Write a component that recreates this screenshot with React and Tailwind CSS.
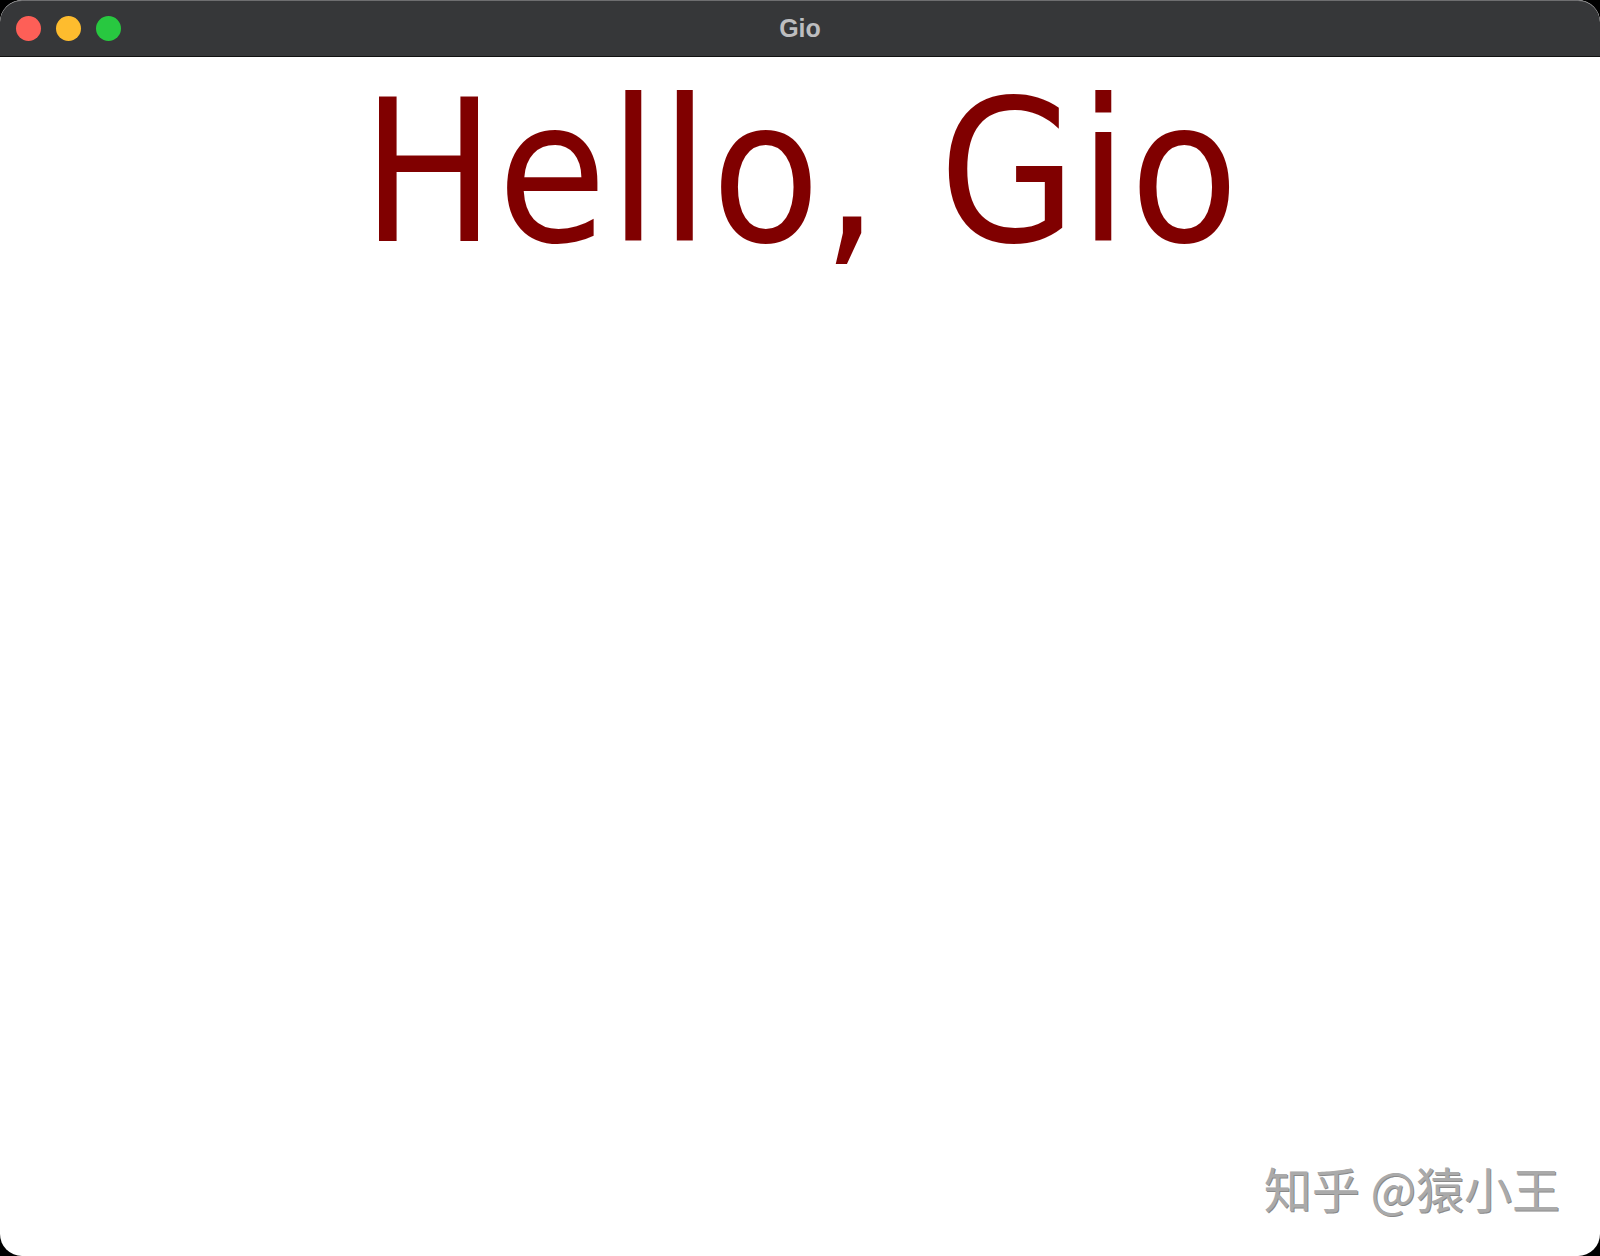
import React from 'react';

const TrafficLights = () => (
  <div className="flex items-center gap-[15px] pl-[16px]">
    <span className="block w-[25px] h-[25px] rounded-full bg-[#fe5f57]" />
    <span className="block w-[25px] h-[25px] rounded-full bg-[#febc2e]" />
    <span className="block w-[25px] h-[25px] rounded-full bg-[#28c840]" />
  </div>
);

const App = () => {
  return (
    <div className="w-[1600px] h-[1256px] bg-black">
      <div className="relative w-full h-full bg-white rounded-[22px] overflow-hidden flex flex-col">
        {/* Title bar */}
        <div className="relative h-[57px] shrink-0 bg-[#363739] border-t border-[#6e6e70] border-b border-b-[#111] rounded-t-[22px] flex items-center">
          <TrafficLights />
          <div
            className="absolute inset-0 flex items-center justify-center text-[25px] font-bold text-[#bdbdbf]"
            style={{ fontFamily: '"Liberation Sans", Arial, sans-serif' }}
          >
            Gio
          </div>
        </div>

        {/* Content */}
        <div className="flex-1 flex justify-center">
          <h1
            className="mt-[17px] pl-[2px] text-[198px] leading-none font-normal tracking-[1.8px] text-[#800000] whitespace-nowrap"
            style={{ fontFamily: '"DejaVu Sans Condensed", "DejaVu Sans", sans-serif', fontStretch: 'condensed' }}
          >
            Hello, Gio
          </h1>
        </div>

        {/* Watermark */}
        <div
          className="absolute right-[40px] bottom-[45px] text-[48px] leading-none text-[#aaaaaa] whitespace-nowrap"
          style={{
            fontFamily: '"Noto Sans CJK SC", "Noto Sans", sans-serif',
            textShadow: '1px 1px 0 #8a8a8a, -1px -1px 0 #ffffff',
          }}
        >
          知乎 @猿小王
        </div>
      </div>
    </div>
  );
};

export default App;
